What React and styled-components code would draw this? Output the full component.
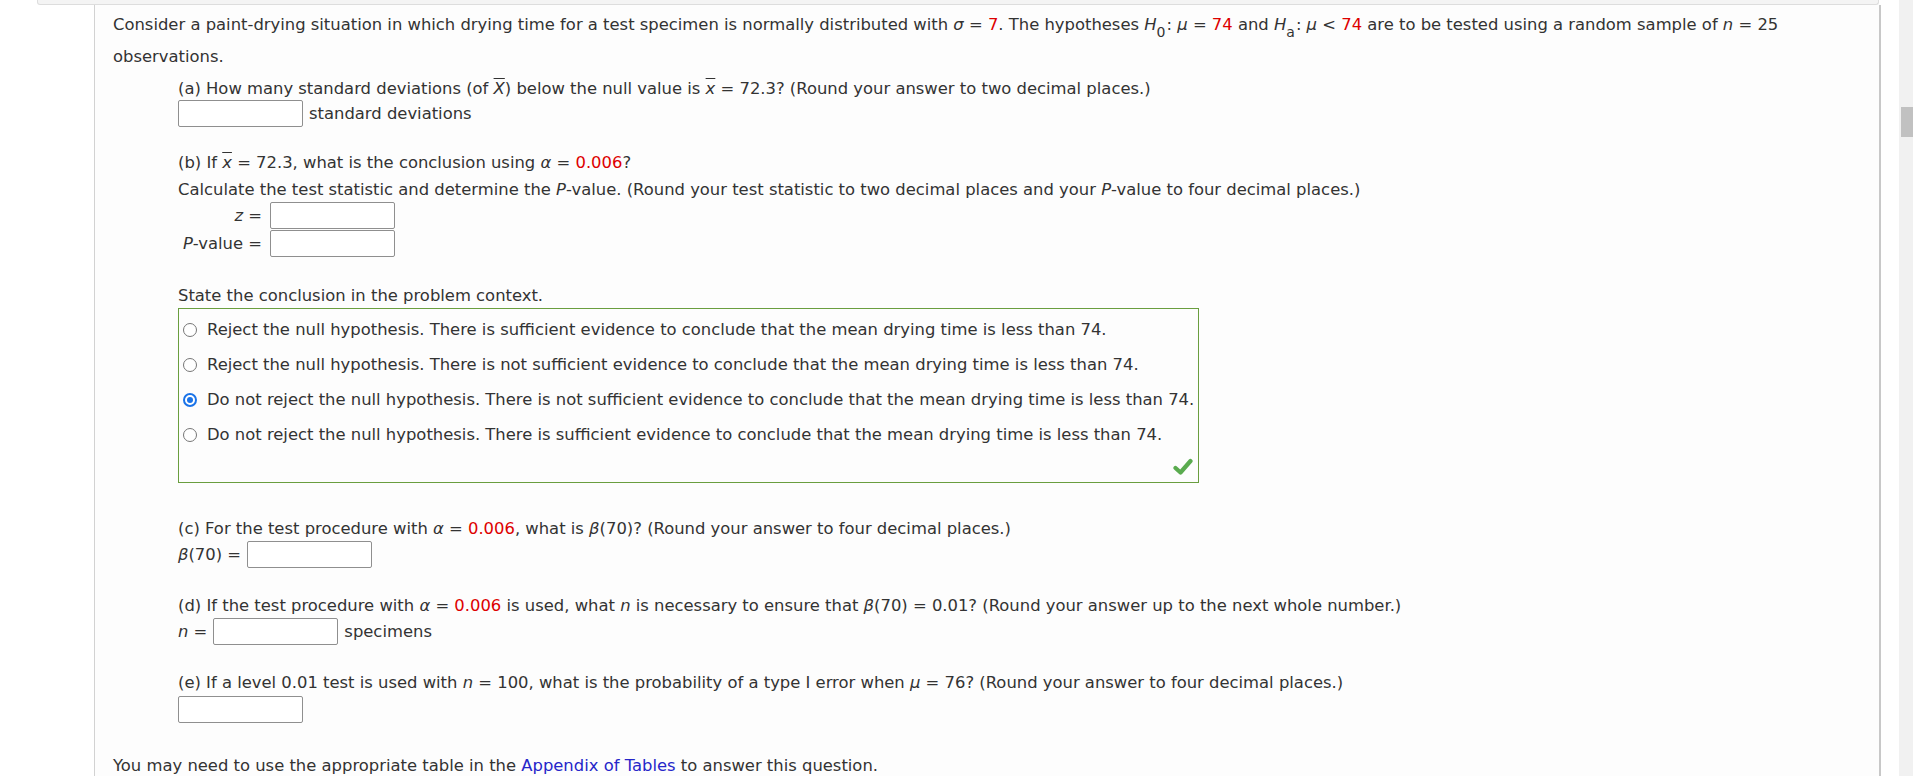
import React from "react";
import styled, { createGlobalStyle } from "styled-components";

const GlobalStyle = createGlobalStyle`
  html, body {
    margin: 0;
    padding: 0;
    background: #ffffff;
    overflow: hidden;
  }
  body {
    font-family: "DejaVu Sans", Verdana, sans-serif;
    font-size: 16.4px;
    color: #333333;
  }
`;

const Page = styled.div`
  display: flex;
  width: 1913px;
  height: 776px;
  overflow: hidden;
`;

const Main = styled.div`
  flex: 1;
  display: flex;
  flex-direction: column;
`;

const TopStrip = styled.div`
  margin-left: 37px;
  width: 1840px;
  height: 4px;
  background: #f4f4f4;
  border: 1px solid #dddddd;
  border-top: none;
  border-radius: 0 0 3px 3px;
`;

const Panel = styled.div`
  margin-left: 94px;
  width: 1766px;
  flex: 1;
  padding-left: 18px;
  border-left: 1px solid #d2d2d2;
  border-right: 2px solid #c8c8c8;
  background: #fdfdfd;
`;

const Intro = styled.p`
  margin: 4px 0 0;
  line-height: 32px;
`;

const Part = styled.div`
  margin-left: 65px;
`;

const Line = styled.div`
  margin-top: ${(p) => p.$top || 0}px;
  line-height: 20px;
  white-space: nowrap;
`;

const Red = styled.span`
  color: #dd0000;
`;

const Ital = styled.i`
  font-style: italic;
`;

const Sub = styled.sub`
  font-size: 14px;
  vertical-align: -7px;
  line-height: 0;
  margin-right: 1px;
`;

const Bar = styled.span`
  font-style: italic;
  text-decoration: overline;
`;

const AnswerRow = styled.div`
  display: flex;
  align-items: center;
  gap: 6px;
  margin-top: ${(p) => p.$top || 0}px;
  height: 27px;
`;

const LabelGrid = styled.div`
  display: grid;
  grid-template-columns: 84px 125px;
  column-gap: 8px;
  row-gap: 1px;
  align-items: center;
  margin-top: 2px;
`;

const GridLabel = styled.span`
  text-align: right;
  white-space: nowrap;
`;

const Field = styled.input`
  box-sizing: border-box;
  width: 125px;
  height: 27px;
  margin: 0;
  border: 1px solid #8f8f8f;
  border-radius: 2px;
  background: #ffffff;
  font: inherit;
`;

const ChoiceBox = styled.div`
  box-sizing: border-box;
  width: 1021px;
  height: 175px;
  margin-top: 2px;
  padding-top: 3px;
  border: 1px solid #6a9e3f;
  display: flex;
  flex-direction: column;
`;

const Choice = styled.label`
  display: flex;
  align-items: center;
  height: 35px;
  padding-left: 4px;
  gap: 10px;
  white-space: nowrap;
`;

const Radio = styled.span`
  box-sizing: border-box;
  flex: none;
  width: 14px;
  height: 14px;
  border-radius: 50%;
  border: ${(p) => (p.$on ? "2px solid #1a73e8" : "1px solid #767676")};
  background: #ffffff;
  display: flex;
  align-items: center;
  justify-content: center;

  &::after {
    content: "";
    display: ${(p) => (p.$on ? "block" : "none")};
    width: 6px;
    height: 6px;
    border-radius: 50%;
    background: #1a73e8;
  }
`;

const CheckRow = styled.div`
  flex: 1;
  display: flex;
  justify-content: flex-end;
  align-items: flex-end;
  padding: 0 5px 7px 0;
`;

const Link = styled.a`
  color: #2626c9;
  text-decoration: none;
`;

const Footer = styled.div`
  margin-top: 33px;
  line-height: 20px;
`;

const Scrollbar = styled.div`
  width: 14px;
  background: #f1f1f1;
  padding-top: 107px;
  display: flex;
  justify-content: flex-end;
`;

const Thumb = styled.div`
  width: 12px;
  height: 30px;
  background: #c1c1c1;
`;

const choices = [
  "Reject the null hypothesis. There is sufficient evidence to conclude that the mean drying time is less than 74.",
  "Reject the null hypothesis. There is not sufficient evidence to conclude that the mean drying time is less than 74.",
  "Do not reject the null hypothesis. There is not sufficient evidence to conclude that the mean drying time is less than 74.",
  "Do not reject the null hypothesis. There is sufficient evidence to conclude that the mean drying time is less than 74.",
];

function CheckMark() {
  return (
    <svg width="20" height="17" viewBox="0 0 20 17">
      <path
        d="M2.5 10 L7.5 14.5 L17.5 3"
        fill="none"
        stroke="#5aab4f"
        strokeWidth="4.2"
        strokeLinecap="round"
        strokeLinejoin="round"
      />
    </svg>
  );
}

export default function App() {
  return (
    <Page>
      <GlobalStyle />
      <Main>
        <TopStrip />
        <Panel>
          <Intro>
            Consider a paint-drying situation in which drying time for a test specimen is normally
            distributed with <Ital>σ</Ital> = <Red>7</Red>. The hypotheses <Ital>H</Ital>
            <Sub>0</Sub>: <Ital>μ</Ital> = <Red>74</Red> and <Ital>H</Ital>
            <Sub>a</Sub>: <Ital>μ</Ital> &lt; <Red>74</Red> are to be tested using a random sample
            of <Ital>n</Ital> = 25 observations.
          </Intro>

          <Part>
            <Line $top={6}>
              (a) How many standard deviations (of <Bar>X</Bar>) below the null value is{" "}
              <Bar>x</Bar> = 72.3? (Round your answer to two decimal places.)
            </Line>
            <AnswerRow $top={1}>
              <Field />
              <span>standard deviations</span>
            </AnswerRow>

            <Line $top={26}>
              (b) If <Bar>x</Bar> = 72.3, what is the conclusion using <Ital>α</Ital> ={" "}
              <Red>0.006</Red>?
            </Line>
            <Line $top={7}>
              Calculate the test statistic and determine the <Ital>P</Ital>-value. (Round your test
              statistic to two decimal places and your <Ital>P</Ital>-value to four decimal places.)
            </Line>
            <LabelGrid>
              <GridLabel>
                <Ital>z</Ital> =
              </GridLabel>
              <Field />
              <GridLabel>
                <Ital>P</Ital>-value =
              </GridLabel>
              <Field />
            </LabelGrid>

            <Line $top={29}>State the conclusion in the problem context.</Line>
            <ChoiceBox>
              {choices.map((c, i) => (
                <Choice key={i}>
                  <Radio $on={i === 2} />
                  {c}
                </Choice>
              ))}
              <CheckRow>
                <CheckMark />
              </CheckRow>
            </ChoiceBox>

            <Line $top={36}>
              (c) For the test procedure with <Ital>α</Ital> = <Red>0.006</Red>, what is{" "}
              <Ital>β</Ital>(70)? (Round your answer to four decimal places.)
            </Line>
            <AnswerRow $top={2}>
              <span>
                <Ital>β</Ital>(70) =
              </span>
              <Field />
            </AnswerRow>

            <Line $top={28}>
              (d) If the test procedure with <Ital>α</Ital> = <Red>0.006</Red> is used, what{" "}
              <Ital>n</Ital> is necessary to ensure that <Ital>β</Ital>(70) = 0.01? (Round your
              answer up to the next whole number.)
            </Line>
            <AnswerRow $top={2}>
              <span>
                <Ital>n</Ital> =
              </span>
              <Field />
              <span>specimens</span>
            </AnswerRow>

            <Line $top={28}>
              (e) If a level 0.01 test is used with <Ital>n</Ital> = 100, what is the probability of
              a type I error when <Ital>μ</Ital> = 76? (Round your answer to four decimal places.)
            </Line>
            <AnswerRow $top={3}>
              <Field />
            </AnswerRow>
          </Part>

          <Footer>
            You may need to use the appropriate table in the <Link href="#">Appendix of Tables</Link>{" "}
            to answer this question.
          </Footer>
        </Panel>
      </Main>
      <Scrollbar>
        <Thumb />
      </Scrollbar>
    </Page>
  );
}
